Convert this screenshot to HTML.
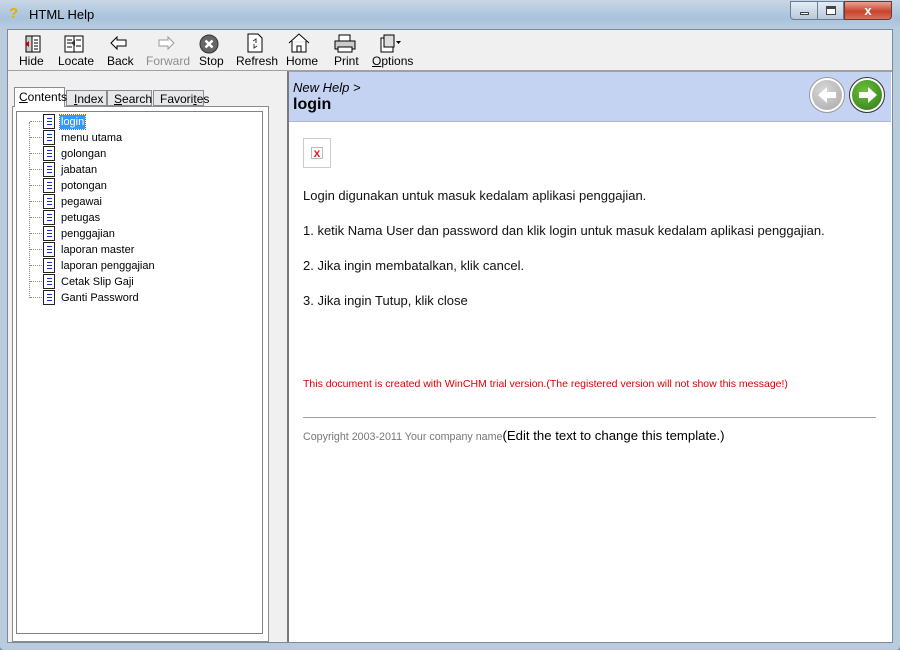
<!DOCTYPE html>
<html><head><style>
*{margin:0;padding:0;box-sizing:border-box}
body{width:900px;height:650px;position:relative;overflow:hidden;background:#6d8fb5;font-family:"Liberation Sans",sans-serif}
.a{position:absolute;white-space:nowrap}
.tb{font-size:12px;color:#000;text-align:center}
.tree div{position:absolute;left:0;height:16px;width:240px;font-size:11px;line-height:14px;white-space:nowrap}
.tree .ic{position:absolute;left:27px;top:0;width:12px;height:15px;border:1px solid #222;background:#fff}
.tree .ic i{position:absolute;left:3px;width:5px;height:1px;background:#1030e0}
.tree .dl{position:absolute;left:14px;top:7px;width:12px;border-top:1px dotted #888}
.tree span{position:absolute;left:44px;top:1px;padding:0 1px;white-space:nowrap}
p{font-size:13px}
</style></head><body>
<!-- frame -->
<div class="a" style="left:0;top:0;width:900px;height:30px;background:linear-gradient(180deg,#c7d7e6,#a9c3dc 60%,#b8cde0)"></div>
<div class="a" style="left:0;top:28px;width:900px;height:622px;background:#b9cbdd;border-radius:0 0 4px 4px"></div>
<div class="a" style="left:9px;top:6px;width:16px;height:16px;font-size:15px;font-weight:bold;color:#e0b000;line-height:16px">?</div>
<div class="a" style="left:29px;top:7px;font-size:13px;color:#000">HTML Help</div>
<!-- window buttons -->
<div class="a" style="left:790px;top:1px;width:28px;height:19px;border:1px solid #6a7d92;border-radius:0 0 0 4px;background:linear-gradient(#e4ecf5,#b8c9db)"><div class="a" style="left:9px;top:10px;width:9px;height:3px;background:#fff;border:1px solid #444"></div></div>
<div class="a" style="left:817px;top:1px;width:27px;height:19px;border:1px solid #6a7d92;background:linear-gradient(#e4ecf5,#b8c9db)"><div class="a" style="left:8px;top:4px;width:10px;height:9px;border:1px solid #444;border-top-width:3px;background:#fff"></div></div>
<div class="a" style="left:844px;top:1px;width:48px;height:19px;border:1px solid #6a3a30;border-radius:0 0 4px 0;background:linear-gradient(#e8a494,#c8442c 55%,#d8705a);color:#fff;font-weight:bold;font-size:13px;text-align:center;line-height:17px">x</div>
<!-- client -->
<div class="a" style="left:7px;top:29px;width:886px;height:614px;background:#f0f0f0;border:1px solid #7a8a9a"></div>
<div class="a" style="left:8px;top:70px;width:884px;height:1px;background:#a0a0a0"></div>
<!-- toolbar -->
<div class="a tb" style="left:20px;top:34px;width:26px">
<svg width="20" height="20" viewBox="0 0 20 20"><rect x="3" y="2" width="14" height="16" fill="#fff" stroke="#000"/><rect x="3" y="2" width="6" height="16" fill="#ccc" stroke="#000"/><path d="M11 6h4M11 9h4M11 12h4M11 15h4" stroke="#000"/><path d="M2 10l4-3v6z" fill="#c00"/></svg></div>
<div class="a tb" style="left:19px;top:54px">Hide</div>
<div class="a tb" style="left:63px;top:34px"><svg width="22" height="20" viewBox="0 0 22 20"><rect x="2" y="2" width="18" height="16" fill="#fff" stroke="#000"/><path d="M11 2v16M4 6h5M4 9h5M13 6h5M13 12h5M4 13h5" stroke="#000"/><path d="M8 9l4-3v6z" fill="#333"/></svg></div>
<div class="a tb" style="left:58px;top:54px">Locate</div>
<div class="a tb" style="left:110px;top:36px"><svg width="18" height="14" viewBox="0 0 18 14"><path d="M1 7l6-6v3h9v6h-9v3z" fill="#fff" stroke="#000"/></svg></div>
<div class="a tb" style="left:107px;top:54px">Back</div>
<div class="a tb" style="left:157px;top:36px"><svg width="18" height="14" viewBox="0 0 18 14"><path d="M17 7l-6-6v3h-9v6h9v3z" fill="#fff" stroke="#999"/></svg></div>
<div class="a tb" style="left:146px;top:54px;color:#8d8d8d">Forward</div>
<div class="a tb" style="left:199px;top:34px"><svg width="20" height="20"><circle cx="10" cy="10" r="9" fill="#666" stroke="#333"/><path d="M6.5 6.5l7 7M13.5 6.5l-7 7" stroke="#fff" stroke-width="2.5"/></svg></div>
<div class="a tb" style="left:199px;top:54px">Stop</div>
<div class="a tb" style="left:246px;top:33px"><svg width="18" height="20" viewBox="0 0 18 20"><path d="M2 1h10l4 4v14H2z" fill="#fff" stroke="#000"/><path d="M7 8l3-2v4M11 13l-3 2v-4" stroke="#333" fill="none"/></svg></div>
<div class="a tb" style="left:236px;top:54px">Refresh</div>
<div class="a tb" style="left:288px;top:33px"><svg width="22" height="20" viewBox="0 0 22 20"><path d="M1 10l10-9 10 9M4 8v11h14V8" fill="#fff" stroke="#000"/><rect x="9" y="13" width="4" height="6" fill="#fff" stroke="#000"/></svg></div>
<div class="a tb" style="left:286px;top:54px">Home</div>
<div class="a tb" style="left:334px;top:34px"><svg width="22" height="19" viewBox="0 0 22 19"><path d="M5 1h11v6H5z" fill="#fff" stroke="#000"/><rect x="1" y="7" width="20" height="8" fill="#ccc" stroke="#000"/><rect x="4" y="13" width="14" height="5" fill="#fff" stroke="#000"/></svg></div>
<div class="a tb" style="left:334px;top:54px">Print</div>
<div class="a tb" style="left:380px;top:34px"><svg width="22" height="19" viewBox="0 0 22 19"><rect x="1" y="4" width="12" height="14" fill="#fff" stroke="#000"/><rect x="4" y="1" width="10" height="12" fill="#ddd" stroke="#000"/><path d="M16 7h5l-2.5 3z" fill="#000"/></svg></div>
<div class="a tb" style="left:372px;top:54px"><u>O</u>ptions</div>
<!-- left pane -->
<div class="a" style="left:14px;top:87px;width:51px;height:20px;background:#fff;border:1px solid #898c95;border-bottom:none;font-size:12px;padding:2px 0 0 4px;z-index:2"><u>C</u>ontents</div>
<div class="a" style="left:66px;top:90px;width:41px;height:16px;background:#e8e8e8;border:1px solid #898c95;font-size:12px;padding:1px 0 0 7px"><u>I</u>ndex</div>
<div class="a" style="left:107px;top:90px;width:45px;height:16px;background:#e8e8e8;border:1px solid #898c95;font-size:12px;padding:1px 0 0 6px"><u>S</u>earch</div>
<div class="a" style="left:153px;top:90px;width:51px;height:16px;background:#e8e8e8;border:1px solid #898c95;font-size:12px;padding:1px 0 0 6px">Favori<u>t</u>es</div>
<div class="a" style="left:12px;top:106px;width:257px;height:536px;background:#fff;border:1px solid #898c95"></div>
<div class="a" style="left:16px;top:111px;width:247px;height:523px;border:1px solid #828282;background:#fff"></div>
<div class="a" style="left:29px;top:122px;width:0;height:176px;border-left:1px dotted #888"></div>
<div class="a tree" style="left:16px;top:114px">
<div style="top:0"><b class="dl"></b><b class="ic"><i style="top:3px"></i><i style="top:6px"></i><i style="top:9px"></i></b><span style="background:#3399ff;color:#fff;outline:1px dotted #c06000">login</span></div>
<div style="top:16px"><b class="dl"></b><b class="ic"><i style="top:3px"></i><i style="top:6px"></i><i style="top:9px"></i></b><span>menu utama</span></div>
<div style="top:32px"><b class="dl"></b><b class="ic"><i style="top:3px"></i><i style="top:6px"></i><i style="top:9px"></i></b><span>golongan</span></div>
<div style="top:48px"><b class="dl"></b><b class="ic"><i style="top:3px"></i><i style="top:6px"></i><i style="top:9px"></i></b><span>jabatan</span></div>
<div style="top:64px"><b class="dl"></b><b class="ic"><i style="top:3px"></i><i style="top:6px"></i><i style="top:9px"></i></b><span>potongan</span></div>
<div style="top:80px"><b class="dl"></b><b class="ic"><i style="top:3px"></i><i style="top:6px"></i><i style="top:9px"></i></b><span>pegawai</span></div>
<div style="top:96px"><b class="dl"></b><b class="ic"><i style="top:3px"></i><i style="top:6px"></i><i style="top:9px"></i></b><span>petugas</span></div>
<div style="top:112px"><b class="dl"></b><b class="ic"><i style="top:3px"></i><i style="top:6px"></i><i style="top:9px"></i></b><span>penggajian</span></div>
<div style="top:128px"><b class="dl"></b><b class="ic"><i style="top:3px"></i><i style="top:6px"></i><i style="top:9px"></i></b><span>laporan master</span></div>
<div style="top:144px"><b class="dl"></b><b class="ic"><i style="top:3px"></i><i style="top:6px"></i><i style="top:9px"></i></b><span>laporan penggajian</span></div>
<div style="top:160px"><b class="dl"></b><b class="ic"><i style="top:3px"></i><i style="top:6px"></i><i style="top:9px"></i></b><span>Cetak Slip Gaji</span></div>
<div style="top:176px"><b class="dl"></b><b class="ic"><i style="top:3px"></i><i style="top:6px"></i><i style="top:9px"></i></b><span>Ganti Password</span></div>
</div>
<!-- right pane -->
<div class="a" style="left:287px;top:71px;width:605px;height:571px;background:#fff;border-left:2px solid #7a7a7a;border-top:1px solid #a0a0a0"></div>
<div class="a" style="left:289px;top:72px;width:602px;height:50px;background:#c5d3f3;border-bottom:1px solid #b0b8c8"></div>
<div class="a" style="left:293px;top:80px;font-size:13px;font-style:italic;color:#000">New Help &gt;</div>
<div class="a" style="left:293px;top:96px;font-size:16px;font-weight:bold;color:#000">login</div>
<div class="a" style="left:809px;top:77px;width:36px;height:36px;border-radius:50%;background:#fff;border:1px solid #999"><div class="a" style="left:2px;top:2px;width:30px;height:30px;border-radius:50%;background:radial-gradient(circle at 40% 35%,#d8d8d8,#a8a8a8)"></div><svg class="a" style="left:6px;top:7px" width="22" height="20"><path d="M2 10l9-8v5h9v6h-9v5z" fill="#fff"/></svg></div>
<div class="a" style="left:849px;top:77px;width:36px;height:36px;border-radius:50%;background:#fff;border:1px solid #333"><div class="a" style="left:2px;top:2px;width:30px;height:30px;border-radius:50%;background:radial-gradient(circle at 40% 35%,#6cbf3a,#2d7a16)"></div><svg class="a" style="left:7px;top:7px" width="22" height="20"><path d="M20 10l-9-8v5h-9v6h9v5z" fill="#fff"/></svg></div>
<div class="a" style="left:303px;top:138px;width:28px;height:30px;border:1px solid #ccc"><div class="a" style="left:7px;top:8px;width:12px;height:12px;border:1px solid #bbb;color:#e02020;font-size:12px;font-weight:bold;line-height:10px;text-align:center">x</div></div>
<p class="a" style="left:303px;top:188px;color:#111">Login digunakan untuk masuk kedalam aplikasi penggajian.</p>
<p class="a" style="left:303px;top:223px;color:#111">1. ketik Nama User dan password dan klik login untuk masuk kedalam aplikasi penggajian.</p>
<p class="a" style="left:303px;top:258px;color:#111">2. Jika ingin membatalkan, klik cancel.</p>
<p class="a" style="left:303px;top:293px;color:#111">3. Jika ingin Tutup, klik close</p>
<div class="a" style="left:303px;top:378px;font-size:10.5px;color:#e00000">This document is created with WinCHM trial version.(The registered version will not show this message!)</div>
<div class="a" style="left:303px;top:417px;width:573px;height:1px;background:#a0a0a0"></div>
<div class="a" style="left:303px;top:428px;font-size:10.7px;color:#777;white-space:nowrap">Copyright 2003-2011 Your company name<span style="font-size:13.2px;color:#000">(Edit the text to change this template.)</span></div>
</body></html>
